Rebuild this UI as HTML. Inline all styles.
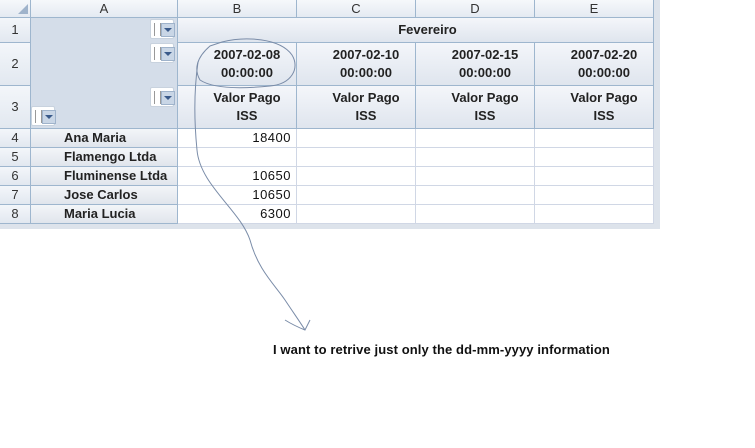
<!DOCTYPE html>
<html><head><meta charset="utf-8"><style>
*{margin:0;padding:0;box-sizing:border-box}
body{width:755px;height:448px;background:#fff;position:relative;overflow:hidden;font-family:"Liberation Sans",sans-serif}
.a{position:absolute}
.ch{background:linear-gradient(#f6f8fb,#e4eaf2);border-right:1px solid #9eb6ce;border-bottom:1px solid #9eb6ce;color:#333;font-size:13px;text-align:center;line-height:17px}
.rh{background:linear-gradient(#f3f6fa,#e2e8f0);border-right:1px solid #9eb6ce;border-bottom:1px solid #9eb6ce;color:#333;font-size:13px;text-align:center}
.hd{background:linear-gradient(#f4f6fa,#dfe5ee);border-right:1px solid #9eb6ce;border-bottom:1px solid #9eb6ce;color:#222;font-size:13px;font-weight:bold;text-align:center;line-height:18px;padding-left:20px}
.nm{background:linear-gradient(#f3f5f8,#e0e5ec);border-right:1px solid #9eb6ce;border-bottom:1px solid #9eb6ce;color:#222;font-size:13px;font-weight:bold;padding-left:33px;line-height:18px}
.c{border-right:1px solid #d0d7e5;border-bottom:1px solid #d0d7e5;font-size:13px;letter-spacing:0.5px;text-align:right;padding-right:5px;line-height:18px;color:#111}
.btn{position:absolute;width:24px;height:20px;background:#fff;border:1px solid #c8d2de;border-radius:2px}
.btn:before{content:"";position:absolute;left:3px;top:3px;width:5px;height:13px;border-left:1px solid #999;border-right:1px solid #999}
.btn:after{content:"";position:absolute;left:10px;top:3px;width:12px;height:12px;background:#c9d6e6;border:1px solid #9fb3cb}
.btn i{position:absolute;left:13px;top:8px;border-left:4px solid transparent;border-right:4px solid transparent;border-top:4px solid #3a5a8a;z-index:2}
</style></head><body>
<div class="a" style="left:0;top:0;width:660px;height:229px;background:#dde3eb"></div>
<div class="a ch" style="left:0;top:0;width:31px;height:18px"></div>
<div class="a" style="left:18px;top:4px;border-left:10px solid transparent;border-bottom:10px solid #9fb3cb"></div>
<div class="a ch" style="left:31px;top:0;width:147px;height:18px">A</div>
<div class="a ch" style="left:178px;top:0;width:119px;height:18px">B</div>
<div class="a ch" style="left:297px;top:0;width:119px;height:18px">C</div>
<div class="a ch" style="left:416px;top:0;width:119px;height:18px">D</div>
<div class="a ch" style="left:535px;top:0;width:119px;height:18px">E</div>
<div class="a rh" style="left:0;top:18px;width:31px;height:25px;line-height:24px">1</div>
<div class="a rh" style="left:0;top:43px;width:31px;height:43px;line-height:42px">2</div>
<div class="a rh" style="left:0;top:86px;width:31px;height:43px;line-height:42px">3</div>
<div class="a rh" style="left:0;top:129px;width:31px;height:19px;line-height:18px">4</div>
<div class="a rh" style="left:0;top:148px;width:31px;height:19px;line-height:18px">5</div>
<div class="a rh" style="left:0;top:167px;width:31px;height:19px;line-height:18px">6</div>
<div class="a rh" style="left:0;top:186px;width:31px;height:19px;line-height:18px">7</div>
<div class="a rh" style="left:0;top:205px;width:31px;height:19px;line-height:18px">8</div>
<div class="a" style="left:31px;top:18px;width:147px;height:111px;background:#d4dde9;border-right:1px solid #9eb6ce;border-bottom:1px solid #9eb6ce"></div>
<div class="btn" style="left:150px;top:19px"><i></i></div>
<div class="btn" style="left:150px;top:43px"><i></i></div>
<div class="btn" style="left:150px;top:87px"><i></i></div>
<div class="btn" style="left:31px;top:106px"><i></i></div>
<div class="a hd" style="left:178px;top:18px;width:476px;height:25px;line-height:24px;padding-left:24px">Fevereiro</div>
<div class="a hd" style="left:178px;top:43px;width:119px;height:43px;padding-top:3px">2007-02-08<br>00:00:00</div>
<div class="a hd" style="left:297px;top:43px;width:119px;height:43px;padding-top:3px">2007-02-10<br>00:00:00</div>
<div class="a hd" style="left:416px;top:43px;width:119px;height:43px;padding-top:3px">2007-02-15<br>00:00:00</div>
<div class="a hd" style="left:535px;top:43px;width:119px;height:43px;padding-top:3px">2007-02-20<br>00:00:00</div>
<div class="a hd" style="left:178px;top:86px;width:119px;height:43px;padding-top:3px">Valor Pago<br>ISS</div>
<div class="a hd" style="left:297px;top:86px;width:119px;height:43px;padding-top:3px">Valor Pago<br>ISS</div>
<div class="a hd" style="left:416px;top:86px;width:119px;height:43px;padding-top:3px">Valor Pago<br>ISS</div>
<div class="a hd" style="left:535px;top:86px;width:119px;height:43px;padding-top:3px">Valor Pago<br>ISS</div>
<div class="a nm" style="left:31px;top:129px;width:147px;height:19px">Ana Maria</div>
<div class="a nm" style="left:31px;top:148px;width:147px;height:19px">Flamengo Ltda</div>
<div class="a nm" style="left:31px;top:167px;width:147px;height:19px">Fluminense Ltda</div>
<div class="a nm" style="left:31px;top:186px;width:147px;height:19px">Jose Carlos</div>
<div class="a nm" style="left:31px;top:205px;width:147px;height:19px">Maria Lucia</div>
<div class="a" style="left:178px;top:129px;width:476px;height:95px;background:#fff"></div>
<div class="a" style="left:178px;top:129px">
<div style="display:grid;grid-template-columns:119px 119px 119px 119px;grid-auto-rows:19px">
<div class="c">18400</div><div class="c"></div><div class="c"></div><div class="c"></div>
<div class="c"></div><div class="c"></div><div class="c"></div><div class="c"></div>
<div class="c">10650</div><div class="c"></div><div class="c"></div><div class="c"></div>
<div class="c">10650</div><div class="c"></div><div class="c"></div><div class="c"></div>
<div class="c">6300</div><div class="c"></div><div class="c"></div><div class="c"></div>
</div></div>
<svg class="a" style="left:0;top:0" width="755" height="448">
<path d="M222,42 C245,36 280,38 292,55 C300,68 292,84 270,86 C250,88 215,90 200,80 C194,70 196,58 210,46 Z" fill="none" stroke="#7a8ca8" stroke-width="1"/>
<path d="M198,62 C194,90 194,120 197,150 C200,185 240,210 250,240 C258,270 275,285 285,300 C295,315 300,322 305,330" fill="none" stroke="#7a8ca8" stroke-width="1"/>
<path d="M285,320 C293,325 300,328 305,330 C307,326 309,322 310,320" fill="none" stroke="#7a8ca8" stroke-width="1"/>
</svg>
<div class="a" style="left:273px;top:342px;font-size:13px;font-weight:bold;color:#111;letter-spacing:0.1px">I want to retrive just only the dd-mm-yyyy information</div>
</body></html>
